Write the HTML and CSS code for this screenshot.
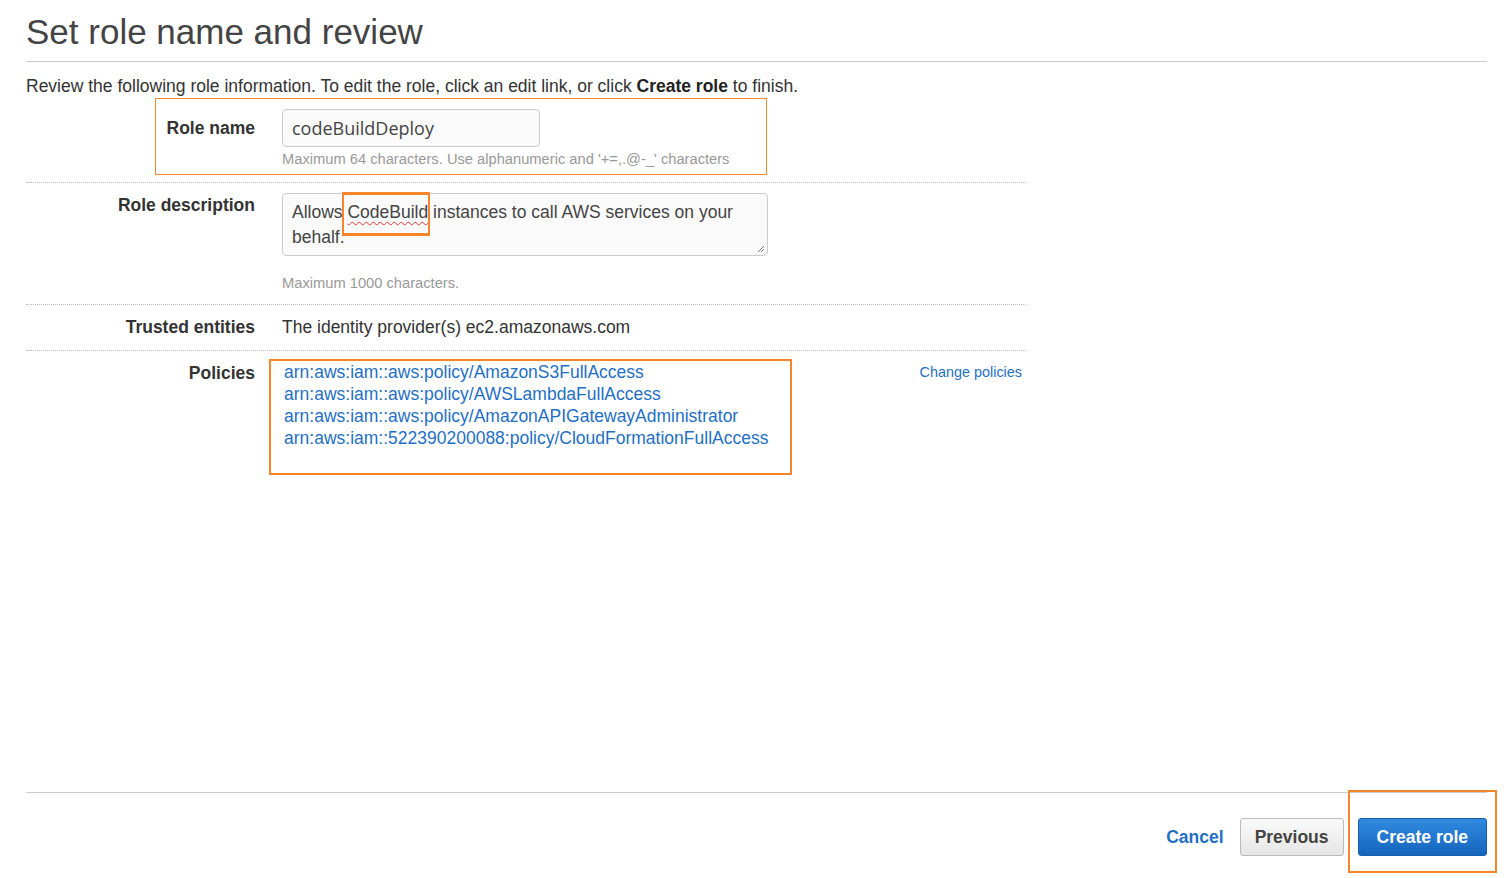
FILE: index.html
```html
<!DOCTYPE html>
<html lang="en">
<head>
    <meta charset="UTF-8">
    <title>Set role name and review</title>
    <link rel="stylesheet" href="styles.css">
</head>
<body>
    <div class="page">
        <h1>Set role name and review</h1>
        <p class="intro">Review the following role information. To edit the role, click an edit link, or click <b>Create role</b> to finish.</p>

        <div class="review">
            <div class="row row-name">
                <div class="label">Role name</div>
                <div class="value">
                    <div class="input">codeBuildDeploy</div>
                    <div class="hint">Maximum 64 characters. Use alphanumeric and '+=,.@-_' characters</div>
                </div>
                <div class="mark mark-name"></div>
            </div>

            <div class="row row-desc">
                <div class="label">Role description</div>
                <div class="value desc-value">
                    <div class="textarea">Allows <span class="typo">CodeBuild</span> instances to call AWS services on your behalf.<svg class="grip" width="8" height="8" viewBox="0 0 8 8"><path d="M7 1 L1 7 M7 4 L4 7" stroke="#777" stroke-width="1"/></svg></div>
                    <div class="mark mark-word"></div>
                    <div class="hint hint-desc">Maximum 1000 characters.</div>
                </div>
            </div>

            <div class="row row-trust">
                <div class="label">Trusted entities</div>
                <div class="value">The identity provider(s) ec2.amazonaws.com</div>
            </div>

            <div class="row row-policies">
                <div class="label">Policies</div>
                <div class="value policies">
                    <a href="#">arn:aws:iam::aws:policy/AmazonS3FullAccess</a>
                    <a href="#">arn:aws:iam::aws:policy/AWSLambdaFullAccess</a>
                    <a href="#">arn:aws:iam::aws:policy/AmazonAPIGatewayAdministrator</a>
                    <a href="#">arn:aws:iam::522390200088:policy/CloudFormationFullAccess</a>
                </div>
                <a href="#" class="change">Change policies</a>
                <div class="mark mark-policies"></div>
            </div>
        </div>

        <div class="footer">
            <a href="#" class="cancel">Cancel</a>
            <button class="btn btn-prev">Previous</button>
            <button class="btn btn-create">Create role</button>
            <div class="mark mark-create"></div>
        </div>
    </div>
</body>
</html>
```

FILE: styles.css
```css
body, html {
    margin: 0;
    padding: 0;
    font-family: "Liberation Sans", Arial, sans-serif;
    color: #333;
    background-color: white;
}

.page {
    padding: 12px 23px 0 26px;
    height: 866px;
    display: flex;
    flex-direction: column;
}

h1 {
    margin: 0;
    font-size: 35px;
    font-weight: normal;
    color: #444;
    line-height: 40px;
    padding-bottom: 9px;
    border-bottom: 1px solid #ccc;
}

.intro {
    margin: 12px 0 0 0;
    font-size: 17.5px;
    line-height: 24px;
    color: #333;
}

.intro b {
    color: #222;
}

.review {
    width: 1000px;
}

.row {
    position: relative;
    display: grid;
    grid-template-columns: 229px 1fr;
    column-gap: 27px;
    border-bottom: 1px dotted #bbb;
    font-size: 17.5px;
}

.label {
    text-align: right;
    font-weight: bold;
    color: #333;
    line-height: 24px;
}

.value {
    line-height: 24px;
}

.row-name {
    padding: 11px 0 14px 0;
}

.row-name .label {
    padding-top: 7px;
}

.input {
    width: 258px;
    height: 38px;
    box-sizing: border-box;
    border: 1px solid #ccc;
    border-radius: 4px;
    background-color: #fafafa;
    padding: 0 9px;
    line-height: 36px;
    font-family: "Open Sans", sans-serif;
    font-size: 18px;
    color: #444;
}

.hint {
    font-size: 14.7px;
    color: #999;
    line-height: 18px;
    margin-top: 3px;
}

.row-desc {
    padding: 10px 0 12px 0;
}

.desc-value {
    position: relative;
}

.textarea {
    position: relative;
    width: 486px;
    height: 63px;
    box-sizing: border-box;
    border: 1px solid #ccc;
    border-radius: 4px;
    background-color: #fafafa;
    padding: 6px 9px;
    line-height: 25px;
    color: #444;
}

.typo {
    text-decoration: underline wavy #e33;
    text-decoration-thickness: 1px;
    text-underline-offset: 3px;
}

.grip {
    position: absolute;
    right: 2px;
    bottom: 2px;
}

.hint-desc {
    margin-top: 18px;
}

.row-trust {
    padding: 10px 0 11px 0;
}

.row-trust .value {
    color: #333;
}

.row-policies {
    padding: 10px 0 0 0;
    border-bottom: none;
}

.policies {
    display: flex;
    flex-direction: column;
    padding-left: 2px;
}

.policies a {
    color: #1f6fc5;
    text-decoration: none;
    line-height: 22px;
}

.change {
    position: absolute;
    right: 4px;
    top: 13px;
    font-size: 14.4px;
    color: #1f6fc5;
    text-decoration: none;
}

.mark {
    position: absolute;
    border: 2px solid #f5862b;
    pointer-events: none;
}

.mark-name {
    left: 129px;
    top: 0;
    width: 610px;
    height: 75px;
    border-width: 1px;
}

.mark-word {
    left: 60px;
    top: -1px;
    width: 84px;
    height: 38px;
    border-width: 3px 2px;
}

.mark-policies {
    left: 243px;
    top: 8px;
    width: 519px;
    height: 112px;
}

.footer {
    position: relative;
    margin-top: auto;
    border-top: 1px solid #ccc;
    height: 60px;
    padding-top: 25px;
    display: flex;
    align-items: flex-start;
    justify-content: flex-end;
    gap: 14px;
}

.cancel {
    color: #1f6fc5;
    font-weight: bold;
    font-size: 17.5px;
    line-height: 38px;
    text-decoration: none;
    margin-right: 2px;
}

.btn {
    height: 38px;
    border-radius: 3px;
    font-family: "Liberation Sans", Arial, sans-serif;
    font-weight: bold;
    font-size: 17.5px;
    padding: 0 14px;
    cursor: pointer;
}

.btn-prev {
    background: linear-gradient(#fafafa, #e6e6e6);
    border: 1px solid #bbb;
    color: #444;
}

.btn-create {
    background: linear-gradient(#2f8ae0, #1665bd);
    border: 1px solid #1a5ea8;
    color: white;
    padding: 0 18px;
}

.mark-create {
    right: -10px;
    top: -3px;
    width: 145px;
    height: 79px;
}
```
